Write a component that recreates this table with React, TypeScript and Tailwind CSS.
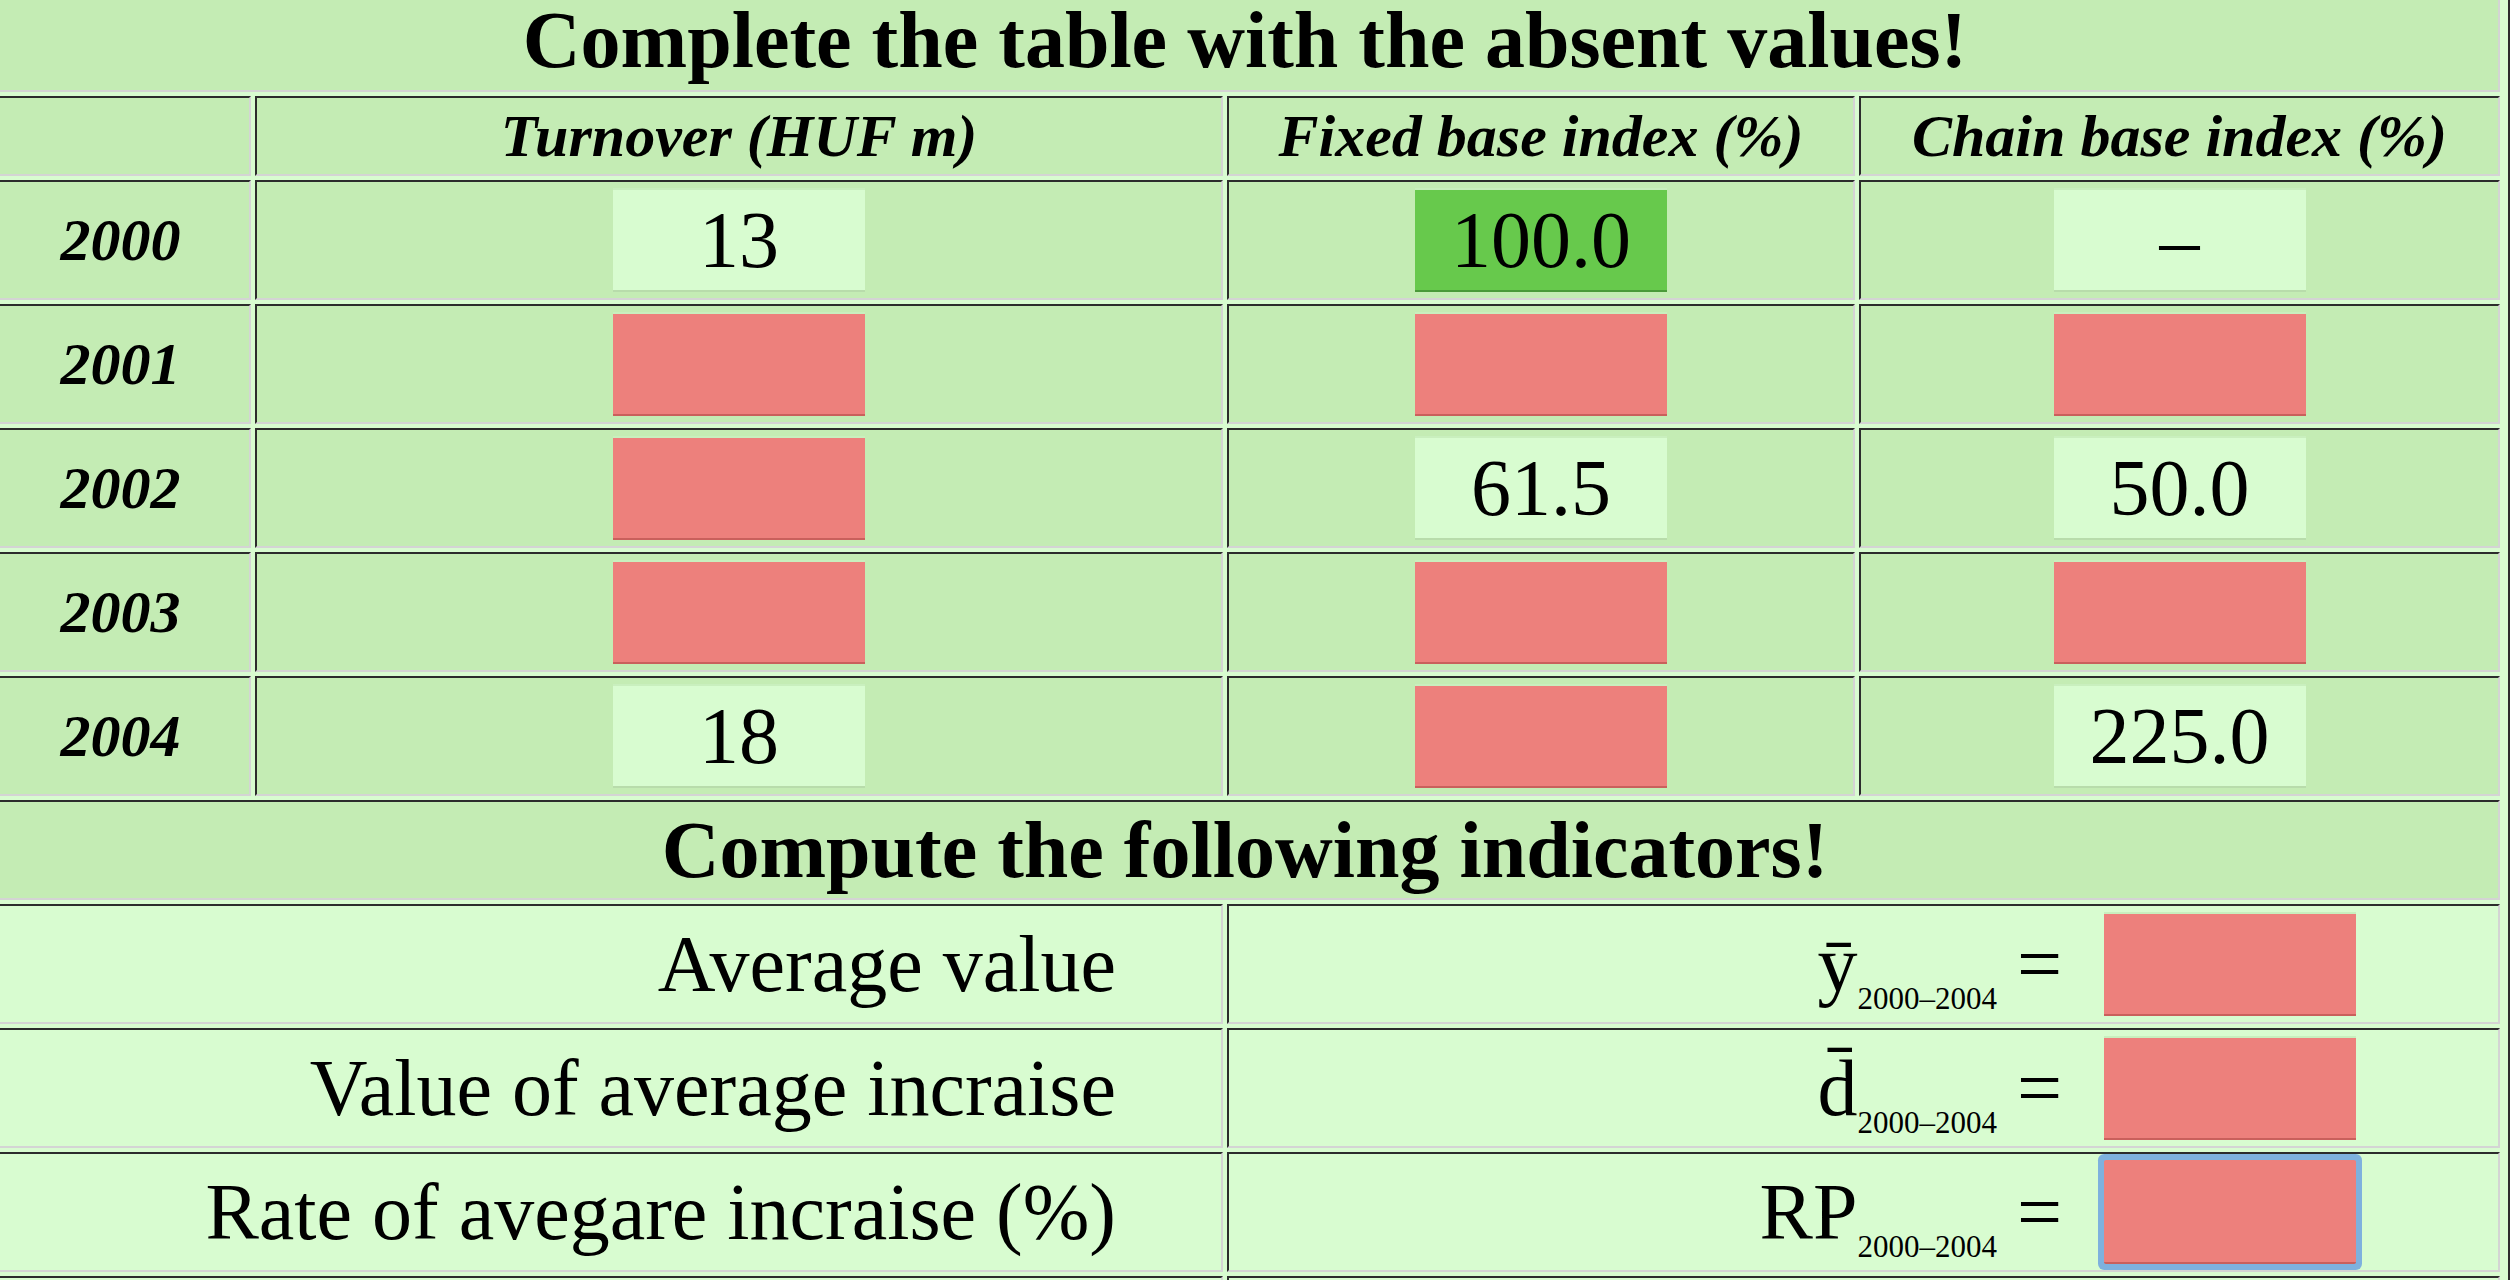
import clsx from "clsx";

type Tone = "given" | "missing" | "correct";
type Entry = { value?: string; tone: Tone };

const rows: { year: string; entries: Entry[] }[] = [
  { year: "2000", entries: [{ value: "13", tone: "given" }, { value: "100.0", tone: "correct" }, { value: "–", tone: "given" }] },
  { year: "2001", entries: [{ tone: "missing" }, { tone: "missing" }, { tone: "missing" }] },
  { year: "2002", entries: [{ tone: "missing" }, { value: "61.5", tone: "given" }, { value: "50.0", tone: "given" }] },
  { year: "2003", entries: [{ tone: "missing" }, { tone: "missing" }, { tone: "missing" }] },
  { year: "2004", entries: [{ value: "18", tone: "given" }, { tone: "missing" }, { value: "225.0", tone: "given" }] },
];

const colWidths = ["w-[968px]", "w-[628px]", "flex-1"];

const cell =
  "bg-[#c4ecb4] border-2 border-t-[#2c2c2c] border-l-[#2c2c2c] border-r-[#d4d4d4] border-b-[#d4d4d4]";
const lightCell =
  "bg-[#d8fcd0] border-2 border-t-[#2c2c2c] border-l-[#2c2c2c] border-r-[#d4d4d4] border-b-[#d4d4d4]";

const tones: Record<Tone, string> = {
  given: "bg-[#d8fcd0] border-t-[#c9efbe] border-b-[#b8dcab]",
  missing: "bg-[#ed807c] border-t-[#c9efbe] border-b-[#c9605c]",
  correct: "bg-[#67c94c] border-t-[#c9efbe] border-b-[#4a9a3a]",
};

function ValueBox({ value, tone, focused, className }: Entry & { focused?: boolean; className?: string }) {
  return (
    <input
      readOnly
      value={value ?? ""}
      className={clsx(
        "w-[252px] h-[104px] shrink-0 border-t-2 border-b-2 text-center text-[80px] leading-none text-black outline-none",
        tones[tone],
        focused && "rounded-[2px] ring-[6px] ring-[#7eb1de] border-t-[#ed807c]",
        className
      )}
    />
  );
}

const indicators = [
  { label: "Average value", symbol: "ȳ" },
  { label: "Value of average incraise", symbol: "d\u0304" },
  { label: "Rate of avegare incraise (%)", symbol: "RP", focused: true },
];

export default function App() {
  return (
    <div className="w-[2510px] h-[1280px] overflow-hidden bg-[#d8fcd0] font-['Liberation_Serif','Times_New_Roman',serif] text-black">
      <div className="flex flex-col gap-[4px] pr-[8px] border-r-2 border-r-[#2c2c2c] min-h-full">
        <div
          className={clsx(
            cell,
            "border-t-0 border-l-0 h-[92px] flex items-center justify-center pb-[10px] pr-[8px] text-[80px] font-bold leading-none whitespace-nowrap"
          )}
        >
          Complete the table with the absent values!
        </div>

        <div className="flex gap-[4px] h-[80px] text-[60px] font-bold italic leading-none">
          <div className={clsx(cell, "w-[251px] border-l-0")} />
          <div className={clsx(cell, "w-[968px] flex items-center justify-center")}>Turnover (HUF m)</div>
          <div className={clsx(cell, "w-[628px] flex items-center justify-center")}>Fixed base index (%)</div>
          <div className={clsx(cell, "flex-1 flex items-center justify-center")}>Chain base index (%)</div>
        </div>

        {rows.map((row) => (
          <div key={row.year} className="flex gap-[4px] h-[120px]">
            <div
              className={clsx(
                cell,
                "w-[251px] border-l-0 flex items-center justify-center pr-[8px] text-[60px] font-bold italic leading-none"
              )}
            >
              {row.year}
            </div>
            {row.entries.map((entry, i) => (
              <div key={i} className={clsx(cell, colWidths[i], "flex items-center justify-center")}>
                <ValueBox {...entry} />
              </div>
            ))}
          </div>
        ))}

        <div
          className={clsx(
            cell,
            "border-l-0 h-[100px] flex items-center justify-center pr-[8px] text-[80px] font-bold leading-none"
          )}
        >
          Compute the following indicators!
        </div>

        {indicators.map((ind) => (
          <div key={ind.label} className="flex gap-[4px] h-[120px]">
            <div
              className={clsx(
                lightCell,
                "w-[1223px] border-l-0 flex items-center justify-end pr-[105px] text-[80px] leading-none whitespace-nowrap"
              )}
            >
              {ind.label}
            </div>
            <div className={clsx(lightCell, "flex-1 flex items-center justify-end pr-[142px]")}>
              <span className="text-[80px] leading-none whitespace-nowrap">
                {ind.symbol}
                <sub className="text-[31px] bottom-[-18px]">2000–2004</sub> =
              </span>
              <ValueBox tone="missing" focused={ind.focused} className="ml-[42px]" />
            </div>
          </div>
        ))}

        <div className="flex gap-[4px] h-[120px] shrink-0">
          <div className={clsx(lightCell, "w-[1223px] border-l-0")} />
          <div className={clsx(lightCell, "flex-1")} />
        </div>
      </div>
    </div>
  );
}
